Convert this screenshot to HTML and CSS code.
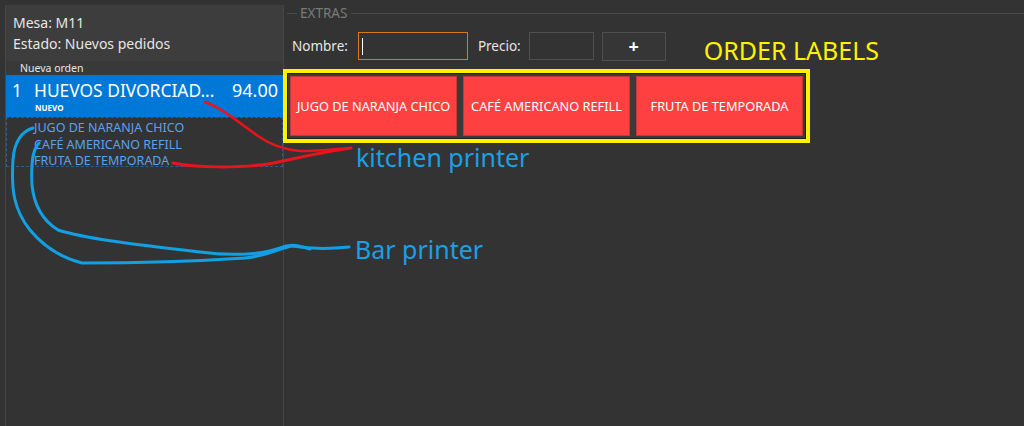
FILE: index.html
```html
<!DOCTYPE html>
<html lang="es">
<head>
  <meta charset="UTF-8" />
  <title>Mesa M11</title>
  <link rel="stylesheet" href="styles.css">
</head>
<body>
  <div class="screen">
    <!-- Order list -->
    <div class="sidebar">
      <div class="table-info">
        <div>Mesa: M11</div>
        <div>Estado: Nuevos pedidos</div>
      </div>
      <div class="order-head">Nueva orden</div>
      <div class="order-row">
        <div class="order-line">
          <span class="qty">1</span>
          <span class="dish">HUEVOS DIVORCIAD...</span>
          <span class="price">94.00</span>
        </div>
        <div class="status">NUEVO</div>
      </div>
      <div class="subitems">
        <div>JUGO DE NARANJA CHICO</div>
        <div>CAFÉ AMERICANO REFILL</div>
        <div>FRUTA DE TEMPORADA</div>
      </div>
    </div>

    <!-- Extras -->
    <div class="main">
      <div class="group-title">
        <span class="rule short"></span>
        <span class="group-name">EXTRAS</span>
        <span class="rule"></span>
      </div>
      <div class="extra-form">
        <label class="field-label name-label">Nombre:</label>
        <div class="input name-input focused"><span class="caret"></span></div>
        <label class="field-label">Precio:</label>
        <div class="input price-input"></div>
        <button class="add-btn">+</button>
        <span class="note-title">ORDER LABELS</span>
      </div>
      <div class="labels-box">
        <div class="labels-inner">
          <button class="label-btn">JUGO DE NARANJA CHICO</button>
          <button class="label-btn">CAFÉ AMERICANO REFILL</button>
          <button class="label-btn">FRUTA DE TEMPORADA</button>
        </div>
      </div>
    </div>
  </div>

  <!-- Hand drawn notes -->
  <svg class="scribbles" width="1024" height="426" viewBox="0 0 1024 426">
    <g fill="none" stroke-linecap="round" stroke-linejoin="round">
      <path stroke="#e8141c" stroke-width="2.5" d="M205 102 C 222 108, 238 122, 258 136 C 272 146, 288 150, 300 151 C 318 151, 336 149, 351 148"/>
      <path stroke="#e8141c" stroke-width="3" d="M173 163 C 195 168, 240 168, 268 164 C 290 160, 320 152, 351 148"/>
      <path stroke="#129fe3" stroke-width="3" d="M33 128 C 22 131, 14 142, 13 160 C 11 190, 14 210, 30 230 C 45 248, 62 258, 82 263 C 130 263, 200 261, 245 258 C 268 256, 280 248, 292 246 C 310 249, 330 249, 349 247"/>
      <path stroke="#129fe3" stroke-width="3" d="M39 143 C 32 150, 31 165, 32 185 C 34 205, 42 220, 58 230 C 90 240, 150 246, 200 252 C 230 256, 262 255, 280 248 C 292 243, 300 246, 310 249"/>
    </g>
  </svg>
  <div class="note kitchen">kitchen printer</div>
  <div class="note bar">Bar printer</div>
</body>
</html>
```

FILE: styles.css
```css
* {
  box-sizing: border-box;
}

body {
  margin: 0;
  padding: 0;
  background: #333333;
  font-family: "Noto Sans", "Open Sans", sans-serif;
  color: #e6e6e6;
  overflow: hidden;
}

.screen {
  display: flex;
  height: 426px;
}

.sidebar {
  width: 279px;
  margin: 5px 0 0 5px;
  border-left: 1px solid #464646;
  border-right: 1px solid #464646;
  flex-shrink: 0;
}

.table-info {
  height: 56px;
  padding: 7px 7px 0;
  background: #3d3d3d;
  font-size: 14px;
  line-height: 21px;
}

.order-head {
  height: 14px;
  padding-left: 14px;
  background: #393939;
  font-size: 10.5px;
  line-height: 14px;
}

.order-row {
  height: 42px;
  background: #0078d7;
  color: #ffffff;
  padding: 2px 5px 0 6px;
}

.order-line {
  display: flex;
  align-items: center;
  font-size: 17.4px;
  line-height: 26px;
}

.qty {
  width: 22px;
}

.dish {
  flex: 1;
}

.price {
  text-align: right;
  font-size: 18px;
}

.status {
  padding-left: 23px;
  font-size: 8px;
  font-weight: bold;
  line-height: 10px;
}

.subitems {
  height: 50px;
  border: 1px dashed #2f5f8f;
  padding: 2px 0 0 27px;
  font-size: 12.5px;
  line-height: 16.5px;
  color: #5aa2ee;
}

.main {
  flex: 1;
}

.group-title {
  display: flex;
  align-items: center;
  height: 26px;
  padding-left: 3px;
}

.rule {
  flex: 1;
  height: 1px;
  background: #4a4a4a;
}

.rule.short {
  flex: 0 0 10px;
}

.group-name {
  padding: 0 4px 0 3px;
  font-size: 13.5px;
  color: #7a7a7a;
}

.extra-form {
  display: flex;
  align-items: center;
  height: 28px;
  margin-top: 6px;
  padding-left: 8px;
}

.field-label {
  font-size: 13.5px;
  margin-right: 8px;
}

.field-label.name-label {
  margin-right: 10px;
}

.input {
  height: 28px;
  border: 1px solid #4f4f4f;
  background: #333333;
}

.input.focused {
  border-color: #d9791b;
  display: flex;
  align-items: center;
  padding-left: 3px;
}

.caret {
  width: 1px;
  height: 17px;
  background: #ffffff;
}

.name-input {
  width: 110px;
  margin-right: 10px;
}

.price-input {
  width: 65px;
  margin-right: 8px;
}

.add-btn {
  width: 64px;
  height: 29px;
  border: 1px solid #4f4f4f;
  background: #363636;
  color: #ffffff;
  font-family: inherit;
  font-size: 18px;
  font-weight: bold;
  line-height: 20px;
  padding: 0;
}

.note-title {
  margin-left: 38px;
  margin-top: 8px;
  font-size: 25px;
  color: #fff200;
}

.labels-box {
  display: inline-block;
  margin: 9px 0 0 -1px;
  border: 4px solid #fff200;
}

.labels-inner {
  display: flex;
  gap: 6px;
  padding: 2px;
  border: 1px solid #1e1e1e;
  background: #3a3a3a;
}

.label-btn {
  width: 167px;
  height: 60px;
  background: #ff4040;
  border: 1px solid #c23838;
  color: #ffffff;
  font-family: inherit;
  font-size: 12.75px;
  padding: 0;
}

.scribbles {
  position: absolute;
  left: 0;
  top: 0;
  pointer-events: none;
}

.note {
  position: absolute;
  font-size: 25px;
  color: #1aa0e6;
  line-height: 30px;
}

.note.kitchen {
  left: 356px;
  top: 142px;
}

.note.bar {
  left: 355px;
  top: 234px;
}
```
